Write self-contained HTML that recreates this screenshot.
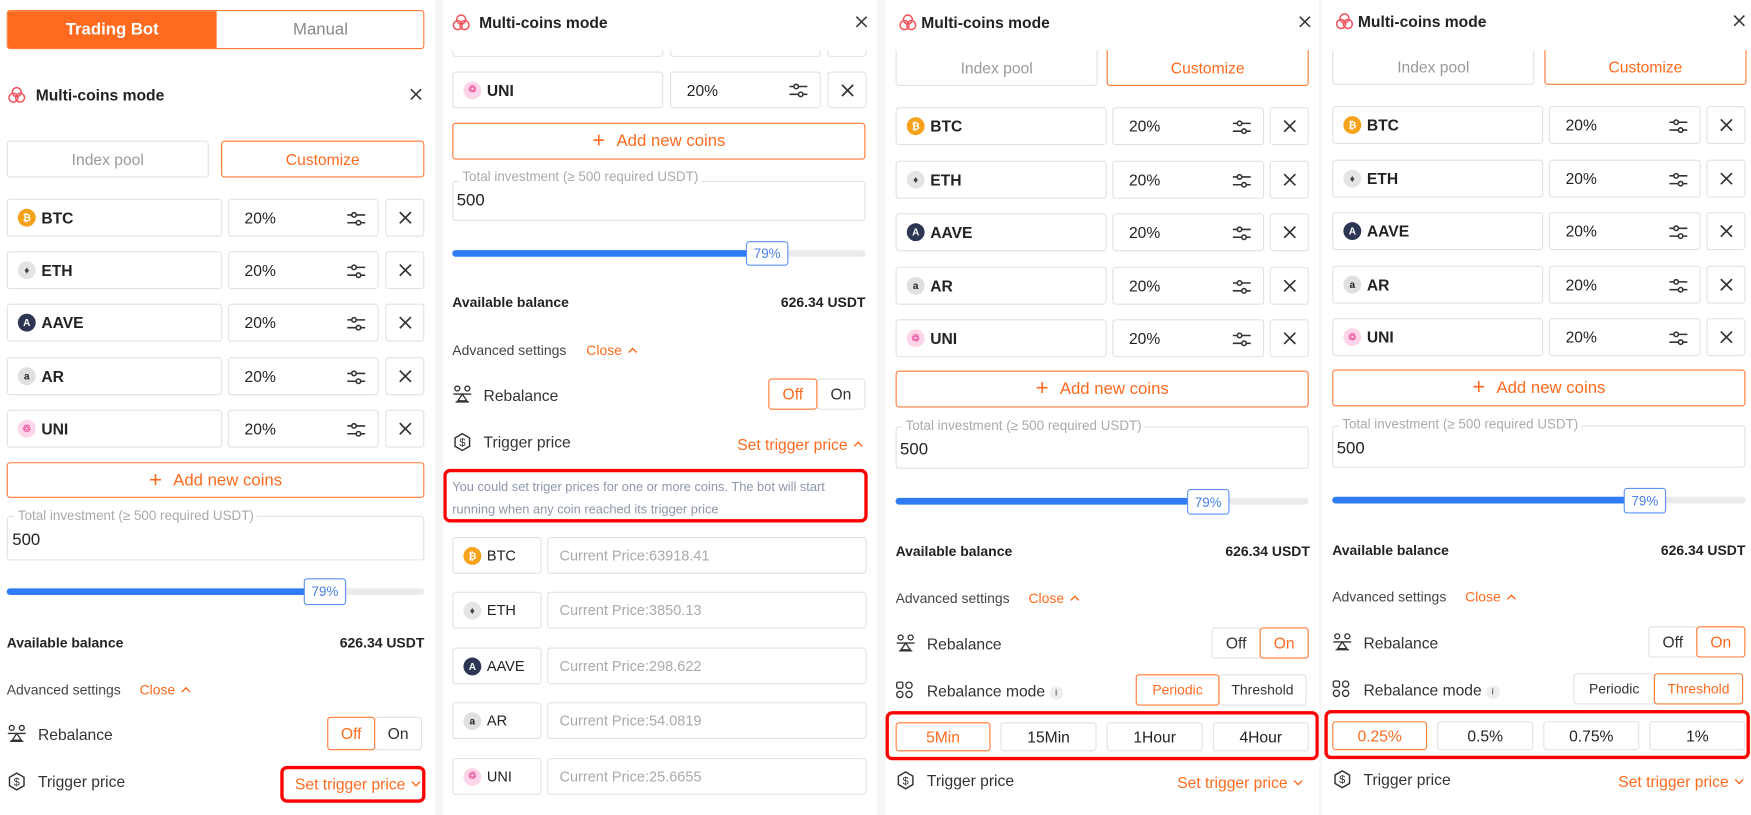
<!DOCTYPE html>
<html><head><meta charset="utf-8">
<style>
*{box-sizing:border-box;margin:0;padding:0}
html,body{width:1751px;height:815px;overflow:hidden;background:#fff;font-family:"Liberation Sans",sans-serif;color:#222}
#w{position:absolute;left:0;top:0;width:1568px;height:730px;transform:scale(1.1167,1.1164);transform-origin:0 0;background:#f6f6f7}
.p{position:absolute;top:0;height:730px;background:#fff;overflow:hidden}
.a{position:absolute}
.b{position:absolute;border:1px solid #e2e2e2;border-radius:3px;background:#fff}
.c{display:flex;align-items:center;justify-content:center}
.o{color:#ff6a1f}
.ob{border-color:#ff7a35}
.t{font-size:14px;line-height:16px}
.nm{display:flex;align-items:center;font-weight:bold;font-size:14px;padding-left:9px}
.ci{width:16px;height:16px;border-radius:50%;margin-right:5px;display:inline-flex;align-items:center;justify-content:center;font-size:9px;color:#fff;font-weight:bold;flex:none}
.btc{background:#f7a21b}.eth{background:#e4e4e4;color:#444}.aave{background:#2c3552}.ar{background:#e0e0e0;color:#222}.uni{background:#fcd6e8;color:#e84393}
.pc{font-size:14px;padding-left:14px;display:flex;align-items:center}
.hd{position:absolute;left:0;top:0;width:100%;height:45px;background:#fff;z-index:5}
.red{position:absolute;border:3px solid #f00;border-radius:6px}
.lbl{position:absolute;font-size:12px;color:#aaa;background:#fff;padding:0 3px;white-space:nowrap}
.sm{font-size:12.5px}
.st{display:flex;align-items:center;gap:5px}
.sp{font-size:14px}
</style></head><body><div id="w">

<svg width="0" height="0" style="position:absolute">
<defs>
<symbol id="mc" viewBox="0 0 16 16"><g fill="none" stroke="#f0565f" stroke-width="1.4"><circle cx="8" cy="5.5" r="4"/><circle cx="5" cy="10.5" r="4"/><circle cx="11" cy="10.5" r="4"/></g></symbol>
<symbol id="sl" viewBox="0 0 18 16"><g fill="none" stroke="#333" stroke-width="1.4"><path d="M1 4.5h16M1 11.5h16"/><circle cx="7" cy="4.5" r="2" fill="#fff"/><circle cx="11" cy="11.5" r="2" fill="#fff"/></g></symbol>
<symbol id="x" viewBox="0 0 12 12"><path d="M1 1L11 11M11 1L1 11" stroke="#333" stroke-width="1.5"/></symbol>
<symbol id="rb" viewBox="0 0 18 16"><g fill="none" stroke="#333" stroke-width="1.2"><circle cx="4.5" cy="3" r="2.2"/><circle cx="13.5" cy="3" r="2.2"/><path d="M1 8h16M9 8l-4 6h8z M3 15h12"/></g></symbol>
<symbol id="tp" viewBox="0 0 18 18"><g fill="none" stroke="#333" stroke-width="1.3"><path d="M9 1.5l6.5 3.75v7.5L9 16.5l-6.5-3.75v-7.5z"/></g><text x="9" y="12.5" font-size="10" text-anchor="middle" fill="#333" font-family="Liberation Sans">$</text></symbol>
<symbol id="rm" viewBox="0 0 16 16"><g fill="none" stroke="#333" stroke-width="1.2"><rect x="1" y="1" width="5.5" height="5.5" rx="1.5"/><circle cx="12" cy="3.8" r="2.8"/><circle cx="3.8" cy="12" r="2.8"/><circle cx="12" cy="12" r="2.8"/></g></symbol>
<symbol id="up" viewBox="0 0 10 6"><path d="M1 5L5 1L9 5" fill="none" stroke="#ff6a1f" stroke-width="1.4"/></symbol>
<symbol id="dn" viewBox="0 0 10 6"><path d="M1 1L5 5L9 1" fill="none" stroke="#ff6a1f" stroke-width="1.4"/></symbol>
</defs></svg>

<!-- PANEL 1 -->
<div class="p" style="left:0;width:390px">
  <div class="b ob" style="left:6px;top:9px;width:374px;height:35px;overflow:hidden;border-radius:3px">
    <div class="a c" style="left:0;top:0;width:187px;height:33px;background:#ff6a1f;color:#fff;font-weight:bold;font-size:15px">Trading Bot</div>
    <div class="a c" style="left:187px;top:0;width:186px;height:33px;color:#888;font-size:15px">Manual</div>
  </div>
  <svg class="a" style="left:7px;top:77px" width="16" height="16"><use href="#mc"/></svg>
  <div class="a" style="left:32px;top:77px;font-weight:bold;font-size:14px">Multi-coins mode</div>
  <svg class="a" style="left:367px;top:79px" width="11" height="11"><use href="#x"/></svg>
  <div class="b c t" style="left:6px;top:126px;width:181px;height:33px;color:#999">Index pool</div>
  <div class="b c t ob o" style="left:198px;top:126px;width:182px;height:33px">Customize</div>

  <div class="b nm" style="left:6px;top:178px;width:193px;height:34px"><span class="ci btc">₿</span>BTC</div>
  <div class="b pc" style="left:204px;top:178px;width:135px;height:34px">20%<svg class="a" style="right:10px;top:9px" width="18" height="16"><use href="#sl"/></svg></div>
  <div class="b c" style="left:345px;top:178px;width:35px;height:34px"><svg width="12" height="12"><use href="#x"/></svg></div>
  <div class="b nm" style="left:6px;top:225px;width:193px;height:34px"><span class="ci eth">♦</span>ETH</div>
  <div class="b pc" style="left:204px;top:225px;width:135px;height:34px">20%<svg class="a" style="right:10px;top:9px" width="18" height="16"><use href="#sl"/></svg></div>
  <div class="b c" style="left:345px;top:225px;width:35px;height:34px"><svg width="12" height="12"><use href="#x"/></svg></div>
  <div class="b nm" style="left:6px;top:272px;width:193px;height:34px"><span class="ci aave">A</span>AAVE</div>
  <div class="b pc" style="left:204px;top:272px;width:135px;height:34px">20%<svg class="a" style="right:10px;top:9px" width="18" height="16"><use href="#sl"/></svg></div>
  <div class="b c" style="left:345px;top:272px;width:35px;height:34px"><svg width="12" height="12"><use href="#x"/></svg></div>
  <div class="b nm" style="left:6px;top:320px;width:193px;height:34px"><span class="ci ar">a</span>AR</div>
  <div class="b pc" style="left:204px;top:320px;width:135px;height:34px">20%<svg class="a" style="right:10px;top:9px" width="18" height="16"><use href="#sl"/></svg></div>
  <div class="b c" style="left:345px;top:320px;width:35px;height:34px"><svg width="12" height="12"><use href="#x"/></svg></div>
  <div class="b nm" style="left:6px;top:367px;width:193px;height:34px"><span class="ci uni">♲</span>UNI</div>
  <div class="b pc" style="left:204px;top:367px;width:135px;height:34px">20%<svg class="a" style="right:10px;top:9px" width="18" height="16"><use href="#sl"/></svg></div>
  <div class="b c" style="left:345px;top:367px;width:35px;height:34px"><svg width="12" height="12"><use href="#x"/></svg></div>

  <div class="b c ob o" style="left:6px;top:414px;width:374px;height:32px;font-size:15px"><span style="font-size:20px;margin-right:10px;font-weight:300">+</span>Add new coins</div>
  <div class="b" style="left:6px;top:462px;width:374px;height:40px"></div>
  <div class="lbl" style="left:13px;top:455px">Total investment (≥ 500 required USDT)</div>
  <div class="a" style="left:11px;top:475px;font-size:15px">500</div>
  <div class="a" style="left:6px;top:527px;width:374px;height:6px;border-radius:3px;background:#ebebeb"></div>
  <div class="a" style="left:6px;top:527px;width:270px;height:6px;border-radius:3px;background:#2f7cf6"></div>
  <div class="a c" style="left:272px;top:518px;width:38px;height:24px;border:1px solid #5b93f5;border-radius:3px;background:#fff;color:#4a7fe8;font-size:12px">79%</div>
  <div class="a sm" style="left:6px;top:569px;font-weight:bold">Available balance</div>
  <div class="a sm" style="right:10px;top:569px;font-weight:bold">626.34 USDT</div>
  <div class="a sm" style="left:6px;top:611px;color:#444">Advanced settings</div>
  <div class="a sm o st" style="left:125px;top:611px">Close<svg width="9" height="6"><use href="#up"/></svg></div>
  <svg class="a" style="left:6px;top:649px" width="18" height="16"><use href="#rb"/></svg>
  <div class="a t" style="left:34px;top:650px;color:#333">Rebalance</div>
  <div class="b c ob o t" style="left:293px;top:642px;width:43px;height:30px;z-index:2">Off</div>
  <div class="b c t" style="left:335px;top:642px;width:43px;height:30px;color:#333">On</div>
  <svg class="a" style="left:6px;top:691px" width="18" height="18"><use href="#tp"/></svg>
  <div class="a t" style="left:34px;top:692px;color:#333">Trigger price</div>
  <div class="a o st sp" style="right:13px;top:694px">Set trigger price<svg width="9" height="6"><use href="#dn"/></svg></div>
  <div class="red" style="left:251px;top:686px;width:130px;height:33px"></div>
</div>

<!-- PANEL 2 -->
<div class="p" style="left:397px;width:388px">
  <div class="hd">
    <svg class="a" style="left:8px;top:12px" width="16" height="16"><use href="#mc"/></svg>
    <div class="a" style="left:32px;top:12px;font-weight:bold;font-size:14px">Multi-coins mode</div>
    <svg class="a" style="left:369px;top:14px" width="11" height="11"><use href="#x"/></svg>
  </div>
  <div class="b" style="left:8px;top:18px;width:189px;height:33px"></div>
  <div class="b" style="left:203px;top:18px;width:135px;height:33px"></div>
  <div class="b" style="left:344px;top:18px;width:35px;height:33px"></div>
  <div class="b nm" style="left:8px;top:64px;width:189px;height:33px"><span class="ci uni">♲</span>UNI</div>
  <div class="b pc" style="left:203px;top:64px;width:135px;height:33px">20%<svg class="a" style="right:10px;top:8px" width="18" height="16"><use href="#sl"/></svg></div>
  <div class="b c" style="left:344px;top:64px;width:35px;height:33px"><svg width="12" height="12"><use href="#x"/></svg></div>
  <div class="b c ob o" style="left:8px;top:110px;width:370px;height:33px;font-size:15px"><span style="font-size:20px;margin-right:10px">+</span>Add new coins</div>
  <div class="b" style="left:8px;top:162px;width:370px;height:36px"></div>
  <div class="lbl" style="left:14px;top:151px">Total investment (≥ 500 required USDT)</div>
  <div class="a" style="left:12px;top:171px;font-size:15px">500</div>
  <div class="a" style="left:8px;top:224px;width:370px;height:6px;border-radius:3px;background:#ebebeb"></div>
  <div class="a" style="left:8px;top:224px;width:266px;height:6px;border-radius:3px;background:#2f7cf6"></div>
  <div class="a c" style="left:271px;top:216px;width:38px;height:22px;border:1px solid #5b93f5;border-radius:3px;background:#fff;color:#4a7fe8;font-size:12px">79%</div>
  <div class="a sm" style="left:8px;top:264px;font-weight:bold">Available balance</div>
  <div class="a sm" style="right:10px;top:264px;font-weight:bold">626.34 USDT</div>
  <div class="a sm" style="left:8px;top:307px;color:#444">Advanced settings</div>
  <div class="a sm o st" style="left:128px;top:307px">Close<svg width="9" height="6"><use href="#up"/></svg></div>
  <svg class="a" style="left:8px;top:345px" width="18" height="16"><use href="#rb"/></svg>
  <div class="a t" style="left:36px;top:346px;color:#333">Rebalance</div>
  <div class="b c ob o t" style="left:291px;top:339px;width:44px;height:28px;z-index:2">Off</div>
  <div class="b c t" style="left:334px;top:339px;width:44px;height:28px;color:#333">On</div>
  <svg class="a" style="left:8px;top:387px" width="18" height="18"><use href="#tp"/></svg>
  <div class="a t" style="left:36px;top:388px;color:#333">Trigger price</div>
  <div class="a o st sp" style="right:12px;top:390px">Set trigger price<svg width="9" height="6"><use href="#up"/></svg></div>
  <div class="red" style="left:0;top:420px;width:380px;height:48px"></div>
  <div class="a" style="left:8px;top:427px;font-size:11.5px;line-height:20px;color:#8d97aa;width:370px">You could set triger prices for one or more coins. The bot will start running when any coin reached its trigger price</div>

  <div class="b nm" style="left:8px;top:481px;width:80px;height:33px;font-weight:normal;font-size:13px"><span class="ci btc">₿</span>BTC</div>
  <div class="b pc" style="left:93px;top:481px;width:286px;height:33px;color:#aaa;font-size:13px;padding-left:10px">Current Price:63918.41</div>
  <div class="b nm" style="left:8px;top:530px;width:80px;height:33px;font-weight:normal;font-size:13px"><span class="ci eth">♦</span>ETH</div>
  <div class="b pc" style="left:93px;top:530px;width:286px;height:33px;color:#aaa;font-size:13px;padding-left:10px">Current Price:3850.13</div>
  <div class="b nm" style="left:8px;top:580px;width:80px;height:33px;font-weight:normal;font-size:13px"><span class="ci aave">A</span>AAVE</div>
  <div class="b pc" style="left:93px;top:580px;width:286px;height:33px;color:#aaa;font-size:13px;padding-left:10px">Current Price:298.622</div>
  <div class="b nm" style="left:8px;top:629px;width:80px;height:33px;font-weight:normal;font-size:13px"><span class="ci ar">a</span>AR</div>
  <div class="b pc" style="left:93px;top:629px;width:286px;height:33px;color:#aaa;font-size:13px;padding-left:10px">Current Price:54.0819</div>
  <div class="b nm" style="left:8px;top:679px;width:80px;height:33px;font-weight:normal;font-size:13px"><span class="ci uni">♲</span>UNI</div>
  <div class="b pc" style="left:93px;top:679px;width:286px;height:33px;color:#aaa;font-size:13px;padding-left:10px">Current Price:25.6655</div>
</div>

<!-- PANEL 3 -->
<div class="p" style="left:793px;width:388px">
  <div class="hd">
    <svg class="a" style="left:12px;top:12px" width="16" height="16"><use href="#mc"/></svg>
    <div class="a" style="left:32px;top:12px;font-weight:bold;font-size:14px">Multi-coins mode</div>
    <svg class="a" style="left:370px;top:14px" width="11" height="11"><use href="#x"/></svg>
  </div>
  <div class="b c t" style="left:9px;top:38px;width:181px;height:39px;color:#999;padding-top:6px">Index pool</div>
  <div class="b c t ob o" style="left:198px;top:38px;width:181px;height:39px;padding-top:6px">Customize</div>

  <div class="b nm" style="left:9px;top:96px;width:189px;height:34px"><span class="ci btc">₿</span>BTC</div>
  <div class="b pc" style="left:203px;top:96px;width:136px;height:34px">20%<svg class="a" style="right:10px;top:9px" width="18" height="16"><use href="#sl"/></svg></div>
  <div class="b c" style="left:344px;top:96px;width:35px;height:34px"><svg width="12" height="12"><use href="#x"/></svg></div>
  <div class="b nm" style="left:9px;top:144px;width:189px;height:34px"><span class="ci eth">♦</span>ETH</div>
  <div class="b pc" style="left:203px;top:144px;width:136px;height:34px">20%<svg class="a" style="right:10px;top:9px" width="18" height="16"><use href="#sl"/></svg></div>
  <div class="b c" style="left:344px;top:144px;width:35px;height:34px"><svg width="12" height="12"><use href="#x"/></svg></div>
  <div class="b nm" style="left:9px;top:191px;width:189px;height:34px"><span class="ci aave">A</span>AAVE</div>
  <div class="b pc" style="left:203px;top:191px;width:136px;height:34px">20%<svg class="a" style="right:10px;top:9px" width="18" height="16"><use href="#sl"/></svg></div>
  <div class="b c" style="left:344px;top:191px;width:35px;height:34px"><svg width="12" height="12"><use href="#x"/></svg></div>
  <div class="b nm" style="left:9px;top:239px;width:189px;height:34px"><span class="ci ar">a</span>AR</div>
  <div class="b pc" style="left:203px;top:239px;width:136px;height:34px">20%<svg class="a" style="right:10px;top:9px" width="18" height="16"><use href="#sl"/></svg></div>
  <div class="b c" style="left:344px;top:239px;width:35px;height:34px"><svg width="12" height="12"><use href="#x"/></svg></div>
  <div class="b nm" style="left:9px;top:286px;width:189px;height:34px"><span class="ci uni">♲</span>UNI</div>
  <div class="b pc" style="left:203px;top:286px;width:136px;height:34px">20%<svg class="a" style="right:10px;top:9px" width="18" height="16"><use href="#sl"/></svg></div>
  <div class="b c" style="left:344px;top:286px;width:35px;height:34px"><svg width="12" height="12"><use href="#x"/></svg></div>

  <div class="b c ob o" style="left:9px;top:332px;width:370px;height:33px;font-size:15px"><span style="font-size:20px;margin-right:10px">+</span>Add new coins</div>
  <div class="b" style="left:9px;top:382px;width:370px;height:38px"></div>
  <div class="lbl" style="left:15px;top:374px">Total investment (≥ 500 required USDT)</div>
  <div class="a" style="left:13px;top:394px;font-size:15px">500</div>
  <div class="a" style="left:9px;top:446px;width:370px;height:6px;border-radius:3px;background:#ebebeb"></div>
  <div class="a" style="left:9px;top:446px;width:264px;height:6px;border-radius:3px;background:#2f7cf6"></div>
  <div class="a c" style="left:270px;top:438px;width:38px;height:23px;border:1px solid #5b93f5;border-radius:3px;background:#fff;color:#4a7fe8;font-size:12px">79%</div>
  <div class="a sm" style="left:9px;top:487px;font-weight:bold">Available balance</div>
  <div class="a sm" style="right:8px;top:487px;font-weight:bold">626.34 USDT</div>
  <div class="a sm" style="left:9px;top:529px;color:#444">Advanced settings</div>
  <div class="a sm o st" style="left:128px;top:529px">Close<svg width="9" height="6"><use href="#up"/></svg></div>
  <svg class="a" style="left:9px;top:568px" width="18" height="16"><use href="#rb"/></svg>
  <div class="a t" style="left:37px;top:569px;color:#333">Rebalance</div>
  <div class="b c t" style="left:292px;top:562px;width:44px;height:28px;color:#333">Off</div>
  <div class="b c ob o t" style="left:335px;top:562px;width:44px;height:28px">On</div>
  <svg class="a" style="left:9px;top:610px" width="16" height="16"><use href="#rm"/></svg>
  <div class="a t" style="left:37px;top:611px;color:#333">Rebalance mode <span style="display:inline-block;width:12px;height:12px;border-radius:50%;background:#eee;font-size:8px;text-align:center;line-height:12px;vertical-align:1px">i</span></div>
  <div class="b c ob o" style="left:224px;top:604px;width:75px;height:28px;font-size:12.5px;z-index:2">Periodic</div>
  <div class="b c" style="left:298px;top:604px;width:79px;height:28px;font-size:12.5px;color:#333">Threshold</div>
  <div class="red" style="left:0;top:637px;width:388px;height:44px"></div>
  <div class="b c ob o" style="left:9px;top:647px;width:85px;height:26px;font-size:14px">5Min</div>
  <div class="b c" style="left:103px;top:647px;width:86px;height:26px;font-size:14px">15Min</div>
  <div class="b c" style="left:198px;top:647px;width:86px;height:26px;font-size:14px">1Hour</div>
  <div class="b c" style="left:293px;top:647px;width:86px;height:26px;font-size:14px">4Hour</div>
  <svg class="a" style="left:9px;top:690px" width="18" height="18"><use href="#tp"/></svg>
  <div class="a t" style="left:37px;top:691px;color:#333">Trigger price</div>
  <div class="a o st sp" style="right:14px;top:693px">Set trigger price<svg width="9" height="6"><use href="#dn"/></svg></div>
</div>

<!-- PANEL 4 -->
<div class="p" style="left:1184px;width:384px">
  <div class="hd">
    <svg class="a" style="left:12px;top:11px" width="16" height="16"><use href="#mc"/></svg>
    <div class="a" style="left:32px;top:11px;font-weight:bold;font-size:14px">Multi-coins mode</div>
    <svg class="a" style="left:368px;top:13px" width="11" height="11"><use href="#x"/></svg>
  </div>
  <div class="b c t" style="left:9px;top:37px;width:181px;height:39px;color:#999;padding-top:6px">Index pool</div>
  <div class="b c t ob o" style="left:199px;top:37px;width:181px;height:39px;padding-top:6px">Customize</div>

  <div class="b nm" style="left:9px;top:95px;width:189px;height:34px"><span class="ci btc">₿</span>BTC</div>
  <div class="b pc" style="left:203px;top:95px;width:136px;height:34px">20%<svg class="a" style="right:10px;top:9px" width="18" height="16"><use href="#sl"/></svg></div>
  <div class="b c" style="left:344px;top:95px;width:35px;height:34px"><svg width="12" height="12"><use href="#x"/></svg></div>
  <div class="b nm" style="left:9px;top:143px;width:189px;height:34px"><span class="ci eth">♦</span>ETH</div>
  <div class="b pc" style="left:203px;top:143px;width:136px;height:34px">20%<svg class="a" style="right:10px;top:9px" width="18" height="16"><use href="#sl"/></svg></div>
  <div class="b c" style="left:344px;top:143px;width:35px;height:34px"><svg width="12" height="12"><use href="#x"/></svg></div>
  <div class="b nm" style="left:9px;top:190px;width:189px;height:34px"><span class="ci aave">A</span>AAVE</div>
  <div class="b pc" style="left:203px;top:190px;width:136px;height:34px">20%<svg class="a" style="right:10px;top:9px" width="18" height="16"><use href="#sl"/></svg></div>
  <div class="b c" style="left:344px;top:190px;width:35px;height:34px"><svg width="12" height="12"><use href="#x"/></svg></div>
  <div class="b nm" style="left:9px;top:238px;width:189px;height:34px"><span class="ci ar">a</span>AR</div>
  <div class="b pc" style="left:203px;top:238px;width:136px;height:34px">20%<svg class="a" style="right:10px;top:9px" width="18" height="16"><use href="#sl"/></svg></div>
  <div class="b c" style="left:344px;top:238px;width:35px;height:34px"><svg width="12" height="12"><use href="#x"/></svg></div>
  <div class="b nm" style="left:9px;top:285px;width:189px;height:34px"><span class="ci uni">♲</span>UNI</div>
  <div class="b pc" style="left:203px;top:285px;width:136px;height:34px">20%<svg class="a" style="right:10px;top:9px" width="18" height="16"><use href="#sl"/></svg></div>
  <div class="b c" style="left:344px;top:285px;width:35px;height:34px"><svg width="12" height="12"><use href="#x"/></svg></div>

  <div class="b c ob o" style="left:9px;top:331px;width:370px;height:33px;font-size:15px"><span style="font-size:20px;margin-right:10px">+</span>Add new coins</div>
  <div class="b" style="left:9px;top:381px;width:370px;height:38px"></div>
  <div class="lbl" style="left:15px;top:373px">Total investment (≥ 500 required USDT)</div>
  <div class="a" style="left:13px;top:393px;font-size:15px">500</div>
  <div class="a" style="left:9px;top:445px;width:370px;height:6px;border-radius:3px;background:#ebebeb"></div>
  <div class="a" style="left:9px;top:445px;width:264px;height:6px;border-radius:3px;background:#2f7cf6"></div>
  <div class="a c" style="left:270px;top:437px;width:38px;height:23px;border:1px solid #5b93f5;border-radius:3px;background:#fff;color:#4a7fe8;font-size:12px">79%</div>
  <div class="a sm" style="left:9px;top:486px;font-weight:bold">Available balance</div>
  <div class="a sm" style="right:5px;top:486px;font-weight:bold">626.34 USDT</div>
  <div class="a sm" style="left:9px;top:528px;color:#444">Advanced settings</div>
  <div class="a sm o st" style="left:128px;top:528px">Close<svg width="9" height="6"><use href="#up"/></svg></div>
  <svg class="a" style="left:9px;top:567px" width="18" height="16"><use href="#rb"/></svg>
  <div class="a t" style="left:37px;top:568px;color:#333">Rebalance</div>
  <div class="b c t" style="left:292px;top:561px;width:44px;height:28px;color:#333">Off</div>
  <div class="b c ob o t" style="left:335px;top:561px;width:44px;height:28px">On</div>
  <svg class="a" style="left:9px;top:609px" width="16" height="16"><use href="#rm"/></svg>
  <div class="a t" style="left:37px;top:610px;color:#333">Rebalance mode <span style="display:inline-block;width:12px;height:12px;border-radius:50%;background:#eee;font-size:8px;text-align:center;line-height:12px;vertical-align:1px">i</span></div>
  <div class="b c" style="left:225px;top:603px;width:73px;height:28px;font-size:12.5px;color:#333">Periodic</div>
  <div class="b c ob o" style="left:297px;top:603px;width:80px;height:28px;font-size:12.5px">Threshold</div>
  <div class="red" style="left:2px;top:636px;width:381px;height:44px"></div>
  <div class="b c ob o" style="left:9px;top:646px;width:85px;height:26px;font-size:14px">0.25%</div>
  <div class="b c" style="left:103px;top:646px;width:86px;height:26px;font-size:14px">0.5%</div>
  <div class="b c" style="left:198px;top:646px;width:86px;height:26px;font-size:14px">0.75%</div>
  <div class="b c" style="left:293px;top:646px;width:86px;height:26px;font-size:14px">1%</div>
  <svg class="a" style="left:9px;top:689px" width="18" height="18"><use href="#tp"/></svg>
  <div class="a t" style="left:37px;top:690px;color:#333">Trigger price</div>
  <div class="a o st sp" style="right:6px;top:692px">Set trigger price<svg width="9" height="6"><use href="#dn"/></svg></div>
</div>

</div></body></html>
